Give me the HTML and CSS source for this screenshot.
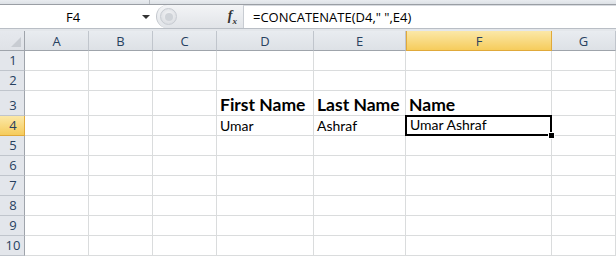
FILE: index.html
```html
<!DOCTYPE html>
<html>
<head>
<meta charset="utf-8">
<link rel="stylesheet" href="styles.css">
</head>
<body>
<div class="app">
  <div class="topstrip"><span class="tick"></span></div>
  <div class="fbar">
    <div class="namebox"><span class="ref">F4</span><span class="arrow"></span></div>
    <div class="mid">
      <div class="knobwrap"><span class="knob"></span></div>
      <span class="fx">f<sub>x</sub></span>
    </div>
    <div class="formula">=CONCATENATE(D4," ",E4)</div>
  </div>
  <div class="sep"></div>
  <div class="sheet">
    <div class="corner"><svg width="12" height="12" viewBox="0 0 12 12"><polygon points="11,1 11,11 1,11" fill="#c8ccd2"/></svg></div>
    <div class="ch">A</div><div class="ch">B</div><div class="ch">C</div><div class="ch">D</div><div class="ch">E</div><div class="ch sel">F</div><div class="ch">G</div>

    <div class="rh">1</div><div class="c"></div><div class="c"></div><div class="c"></div><div class="c"></div><div class="c"></div><div class="c"></div><div class="c"></div>
    <div class="rh">2</div><div class="c"></div><div class="c"></div><div class="c"></div><div class="c"></div><div class="c"></div><div class="c"></div><div class="c"></div>
    <div class="rh">3</div><div class="c"></div><div class="c"></div><div class="c"></div><div class="c b">First Name</div><div class="c b">Last Name</div><div class="c b">Name</div><div class="c"></div>
    <div class="rh sel">4</div><div class="c"></div><div class="c"></div><div class="c"></div><div class="c">Umar</div><div class="c">Ashraf</div><div class="c active">Umar Ashraf<span class="handle"></span></div><div class="c"></div>
    <div class="rh">5</div><div class="c"></div><div class="c"></div><div class="c"></div><div class="c"></div><div class="c"></div><div class="c"></div><div class="c"></div>
    <div class="rh">6</div><div class="c"></div><div class="c"></div><div class="c"></div><div class="c"></div><div class="c"></div><div class="c"></div><div class="c"></div>
    <div class="rh">7</div><div class="c"></div><div class="c"></div><div class="c"></div><div class="c"></div><div class="c"></div><div class="c"></div><div class="c"></div>
    <div class="rh">8</div><div class="c"></div><div class="c"></div><div class="c"></div><div class="c"></div><div class="c"></div><div class="c"></div><div class="c"></div>
    <div class="rh">9</div><div class="c"></div><div class="c"></div><div class="c"></div><div class="c"></div><div class="c"></div><div class="c"></div><div class="c"></div>
    <div class="rh">10</div><div class="c"></div><div class="c"></div><div class="c"></div><div class="c"></div><div class="c"></div><div class="c"></div><div class="c"></div>
  </div>
</div>
</body>
</html>
```
FILE: styles.css
```css
* { box-sizing: border-box; }
html, body { margin: 0; padding: 0; background: #ffffff; }
.app { width: 616px; height: 256px; overflow: hidden; font-family: "Open Sans", "DejaVu Sans", sans-serif; }

.topstrip { height: 5px; background: linear-gradient(#e9ecf0, #dde1e6); border-bottom: 1px solid #9a9ea4; position: relative; }
.tick { position: absolute; left: 149px; top: 0; width: 1px; height: 4px; background: #b8bcc2; }

.fbar { height: 23px; display: flex; background: #fff; }
.namebox { width: 156px; display: flex; align-items: center; position: relative; }
.ref { flex: 1; text-align: center; font-size: 13px; color: #000; padding-left: 4px; }
.arrow { width: 0; height: 0; border-left: 4px solid transparent; border-right: 4px solid transparent; border-top: 4px solid #333; margin-right: 6px; }

.mid { width: 87px; display: flex; align-items: center; justify-content: space-between; background: linear-gradient(#f3f4f6, #e1e4e8); border-left: 1px solid #c3c7cd; border-radius: 12px 0 0 12px; padding: 0 6px 0 3px; }
.knobwrap { width: 17px; height: 17px; display: flex; align-items: center; justify-content: center; border-radius: 50%; background: radial-gradient(circle at 50% 40%, #f4f5f7, #d4d7dc); border: 1px solid #c8ccd2; }
.knob { width: 8px; height: 8px; border-radius: 50%; background: #cfd3d8; }
.fx { font-family: "Liberation Serif", serif; font-style: italic; font-weight: bold; font-size: 14px; color: #333; }
.fx sub { font-size: 9px; }

.formula { flex: 1; display: flex; align-items: center; padding-left: 9px; font-size: 13px; color: #000; border-left: 1px solid #c8ccd2; border-top: 1px solid #d8dbe0; }

.sep { height: 3px; background: #e4e7eb; border-top: 1px solid #b9bec5; }

.sheet { display: grid; grid-template-columns: 25px 64px 64px 64px 97px 92px 146px 64px; grid-template-rows: 20px 20px 20px 25px 20px 20px 20px 20px 20px 20px 20px; }

.corner { background: linear-gradient(#e6e9ee, #dfe2e7); border-right: 1px solid #9fa4ab; border-bottom: 1px solid #9fa4ab; display: flex; align-items: flex-end; justify-content: flex-end; padding: 0 2px 2px 0; }
.ch { background: linear-gradient(#e9ecf0, #dde1e6); border-right: 1px solid #c0c5cc; border-bottom: 1px solid #9fa4ab; display: flex; align-items: center; justify-content: center; font-size: 13px; color: #27415f; }
.ch.sel { background: linear-gradient(#fbe8a8, #f6cc5c); border-right: 1px solid #e0a93a; border-left: 1px solid #e0a93a; border-bottom: 1px solid #e0a93a; }
.rh { background: #e3e6eb; border-right: 1px solid #9fa4ab; border-bottom: 1px solid #c0c5cc; display: flex; align-items: flex-end; justify-content: center; padding-bottom: 1px; padding-left: 2px; font-size: 13px; color: #27415f; }
.rh.sel { background: linear-gradient(#fbe8a8, #f6cc5c); border-right: 1px solid #e0a93a; border-bottom: 1px solid #e0a93a; }

.c { border-right: 1px solid #dadcdd; border-bottom: 1px solid #dadcdd; font-family: "Lato", "Open Sans", sans-serif; font-size: 14px; color: #000; display: flex; align-items: flex-end; padding: 0 0 1px 3px; white-space: nowrap; position: relative; }
.c.b { font-weight: bold; font-size: 17.5px; padding-bottom: 0; }
.c.active { border: 2px solid #000; margin: -1px 0 0 -1px; padding-left: 3px; z-index: 2; }
.handle { position: absolute; right: -5px; bottom: -5px; width: 7px; height: 7px; background: #000; border: 1px solid #fff; }
```
